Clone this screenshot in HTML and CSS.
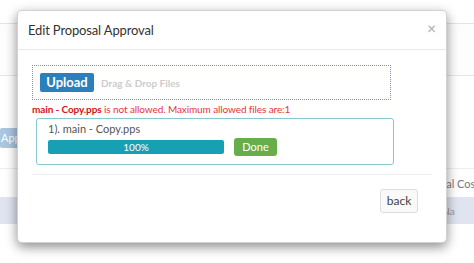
FILE: index.html
```html
<!DOCTYPE html>
<html>
<head>
<meta charset="utf-8">
<link rel="stylesheet" href="styles.css">
</head>
<body>
<div class="page">
  <div class="bg-top"></div>
  <div class="bg-band"></div>
  <div class="bg-actions"><span class="bg-btn">Approve</span></div>
  <div class="bg-head"><span class="bg-th">Total Cost</span></div>
  <div class="bg-row"><span class="bg-td">0.00 Na</span></div>
</div>

<div class="modal">
  <div class="modal-header">
    <span class="modal-title">Edit Proposal Approval</span>
    <span class="close">×</span>
  </div>
  <div class="modal-body">
    <div class="dropzone">
      <span class="upload-btn">Upload</span>
      <span class="drag-text">Drag &amp; Drop Files</span>
    </div>
    <div class="error"><b>main - Copy.pps</b> is not allowed. Maximum allowed files are:1</div>
    <div class="file-panel">
      <div class="file-name">1). main - Copy.pps</div>
      <div class="file-row">
        <div class="progress"><div class="progress-bar" style="width:100%">100%</div></div>
        <span class="done-btn">Done</span>
      </div>
    </div>
  </div>
  <div class="modal-footer">
    <span class="back-btn">back</span>
  </div>
</div>
</body>
</html>
```
FILE: styles.css
```css
* { box-sizing: border-box; }
html, body { margin: 0; padding: 0; }
body {
  width: 474px;
  height: 263px;
  overflow: hidden;
  background: #fff;
  font-family: Lato, "Open Sans", "Liberation Sans", sans-serif;
  position: relative;
  color: #333;
}
.page { width: 474px; }
.bg-top { height: 24px; border-bottom: 1px solid #e4e4e4; }
.bg-band { height: 52px; border-bottom: 1px solid #e6e6e6; background: #fdfdfd; }
.bg-actions { height: 93px; padding-top: 52px; border-bottom: 1px solid #eee; }
.bg-btn {
  display: block;
  width: 60px;
  height: 20px;
  background: #aac6e0;
  color: #fff;
  font-size: 11px;
  line-height: 20px;
  padding-left: 1px;
  border-radius: 2px;
}
.bg-head { height: 28px; display: flex; align-items: center; padding-left: 431px; overflow: hidden; }
.bg-th { font-size: 11px; color: #777; white-space: nowrap; }
.bg-row { height: 27px; background: #dfe4f0; display: flex; align-items: center; padding-left: 420px; }
.bg-td { font-size: 10px; color: #999; }

.modal {
  position: absolute;
  left: 17px;
  top: 10px;
  width: 430px;
  height: 233px;
  background: #fff;
  border: 1px solid rgba(0,0,0,0.18);
  border-radius: 5px;
  box-shadow: 0 4px 12px rgba(0,0,0,0.45);
  display: flex;
  flex-direction: column;
}
.modal-header {
  height: 39px;
  border-bottom: 1px solid #e8e8e8;
  display: flex;
  align-items: center;
  justify-content: space-between;
  padding: 0 10px 0 10px;
}
.modal-title { font-size: 13px; letter-spacing: -0.15px; color: #333; }
.close { font-size: 15px; color: #bbb; font-weight: bold; margin-top: -4px; }
.modal-body { padding: 15px 0 0 14px; }
.dropzone {
  width: 359px;
  height: 35px;
  border: 1px dotted #8e8ea8;
  display: flex;
  align-items: center;
  padding-left: 7px;
}
.upload-btn {
  display: inline-block;
  width: 54px;
  height: 19px;
  background: #2b80bb;
  color: #fff;
  font-weight: bold;
  font-size: 13px;
  line-height: 19px;
  text-align: center;
  border-radius: 2px;
}
.drag-text { margin-left: 7px; font-size: 10px; font-weight: bold; color: #ccc; }
.error { font-size: 10px; letter-spacing: -0.1px; color: #e4343c; margin-top: 2px; line-height: 14px; }
.error b { color: #d4121b; }
.file-panel {
  margin-left: 4px;
  margin-top: 2px;
  width: 358px;
  height: 47px;
  border: 1px solid #85c9cf;
  border-radius: 3px;
  padding: 3px 0 0 11px;
}
.file-name { font-size: 11px; color: #555; line-height: 14px; }
.file-row { display: flex; align-items: center; margin-top: 2px; }
.progress { width: 176px; height: 14px; background: #eee; border-radius: 2px; overflow: hidden; }
.progress-bar { height: 14px; background: #17a0b4; color: #fff; font-size: 10px; line-height: 14px; text-align: center; }
.done-btn {
  margin-left: 10px;
  width: 43px;
  height: 18px;
  background: #68ad4b;
  color: #fff;
  font-size: 11px;
  line-height: 18px;
  text-align: center;
  border-radius: 3px;
}
.modal-footer {
  margin: 9px 14px 0 14px;
  border-top: 1px solid #eceeee;
  display: flex;
  justify-content: flex-end;
  padding: 14px 14px 0 0;
}
.back-btn {
  width: 38px;
  height: 24px;
  border: 1px solid #ddd;
  background: #f9f9f9;
  border-radius: 3px;
  font-size: 12px;
  color: #444;
  line-height: 22px;
  text-align: center;
}
```
